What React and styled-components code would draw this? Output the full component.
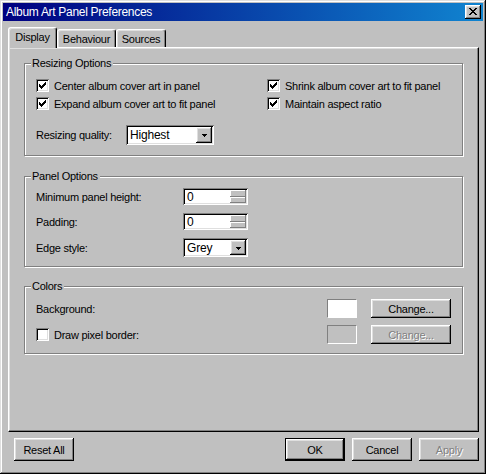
import React from 'react';
import styled, { createGlobalStyle, css } from 'styled-components';

const Global = createGlobalStyle`
  html, body { margin: 0; padding: 0; background: #c0c0c0; }
  body {
    font-family: "Liberation Sans", Arial, sans-serif;
    font-size: 11px;
    letter-spacing: -0.25px;
    color: #000;
  }
  * { box-sizing: border-box; }
`;

const raised = css`
  box-shadow: inset -1px -1px 0 #000, inset 1px 1px 0 #fff,
    inset -2px -2px 0 #808080, inset 2px 2px 0 #dfdfdf;
`;
const sunken = css`
  box-shadow: inset 1px 1px 0 #808080, inset -1px -1px 0 #fff,
    inset 2px 2px 0 #000, inset -2px -2px 0 #dfdfdf;
`;

const Window = styled.div`
  width: 486px;
  height: 474px;
  background: #c0c0c0;
  padding: 3px;
  display: flex;
  flex-direction: column;
  box-shadow: inset -1px -1px 0 #000, inset 1px 1px 0 #dfdfdf,
    inset -2px -2px 0 #808080, inset 2px 2px 0 #fff;
`;

const TitleBar = styled.div`
  height: 18px;
  flex: none;
  display: flex;
  align-items: center;
  justify-content: space-between;
  padding: 0 2px 0 3px;
  background: linear-gradient(90deg, #000080 0%, #1084d0 100%);
`;

const TitleText = styled.span`
  color: #fff;
  font-size: 12px;
  letter-spacing: -0.3px;
  line-height: 18px;
`;

const CloseButton = styled.span`
  width: 16px;
  height: 14px;
  background: #c0c0c0;
  ${raised};
  display: flex;
  align-items: center;
  justify-content: center;
  padding: 0 1px 1px 0;
`;

const Body = styled.div`
  flex: 1;
  display: flex;
  flex-direction: column;
  padding: 6px 4px 0 5px;
`;

const TabStrip = styled.div`
  height: 20px;
  display: flex;
  align-items: flex-end;
  position: relative;
  z-index: 1;
`;

const Tab = styled.div`
  width: ${(p) => p.$w}px;
  height: ${(p) => (p.$active ? 21 : 18)}px;
  margin-bottom: ${(p) => (p.$active ? -1 : 0)}px;
  background: #c0c0c0;
  border-top: 1px solid #fff;
  border-left: 1px solid #fff;
  border-right: 1px solid #000;
  border-radius: 3px 3px 0 0;
  box-shadow: inset -1px 0 0 #808080, inset 1px 1px 0 #dfdfdf;
  display: flex;
  align-items: center;
  justify-content: center;
  padding-bottom: ${(p) => (p.$active ? 2 : 0)}px;
  font-size: 11px;
  white-space: nowrap;
`;

const Panel = styled.div`
  height: 385px;
  flex: none;
  background: #c0c0c0;
  border-top: 1px solid #fff;
  border-left: 1px solid #fff;
  border-right: 1px solid #000;
  border-bottom: 1px solid #000;
  box-shadow: inset -1px -1px 0 #808080, inset 1px 1px 0 #dfdfdf;
  padding: 15px 15px 0 15px;
  display: flex;
  flex-direction: column;
`;

const Group = styled.div`
  position: relative;
  height: ${(p) => p.$h}px;
  margin-top: ${(p) => p.$mt || 0}px;
  flex: none;
  border: 1px solid #808080;
  box-shadow: inset 1px 1px 0 #fff, 1px 1px 0 #fff;
  padding: ${(p) => p.$pt}px 11px 0 11px;
`;

const Legend = styled.span`
  position: absolute;
  top: -7px;
  left: 6px;
  padding: 0 2px 0 1px;
  line-height: 13px;
  background: #c0c0c0;
  white-space: nowrap;
`;

const CheckGrid = styled.div`
  display: grid;
  grid-template-columns: 231px auto;
  row-gap: 5px;
`;

const CheckRow = styled.label`
  display: flex;
  align-items: center;
  gap: 5px;
  flex: ${(p) => (p.$grow ? 1 : 'none')};
  white-space: nowrap;
`;

const CheckBox = styled.span`
  width: 13px;
  height: 13px;
  flex: none;
  background: #fff;
  ${sunken};
  display: flex;
  align-items: center;
  justify-content: center;
`;

const FieldRow = styled.div`
  display: flex;
  align-items: center;
  margin-top: ${(p) => p.$mt || 0}px;
`;

const FieldLabel = styled.span`
  width: ${(p) => (p.$w ? `${p.$w}px` : 'auto')};
  flex: ${(p) => (p.$w ? 'none' : 1)};
  white-space: nowrap;
`;

const Combo = styled.div`
  width: ${(p) => p.$w}px;
  height: ${(p) => p.$h}px;
  background: #fff;
  ${sunken};
  padding: 2px;
  display: flex;
  align-items: stretch;
`;

const FieldText = styled.span`
  flex: 1;
  padding-left: 2px;
  display: flex;
  align-items: center;
  font-size: 12px;
  letter-spacing: -0.2px;
`;

const DropButton = styled.span`
  width: 16px;
  flex: none;
  background: #c0c0c0;
  ${raised};
  display: flex;
  align-items: center;
  justify-content: center;
  padding-top: 1px;
`;

const SpinButtons = styled.span`
  width: 16px;
  flex: none;
  display: flex;
  flex-direction: column;
`;

const SpinButton = styled.span`
  flex: 1;
  background: #c0c0c0;
  box-shadow: inset -1px -1px 0 #808080, inset 1px 1px 0 #fff;
`;

const Rows = styled.div`
  display: flex;
  flex-direction: column;
  gap: ${(p) => p.$gap}px;
`;

const Swatch = styled.span`
  width: 30px;
  height: 19px;
  flex: none;
  background: ${(p) => p.$color};
  border: 1px solid;
  border-color: #808080 #fff #fff #808080;
`;

const Button = styled.button`
  width: ${(p) => p.$w}px;
  height: ${(p) => p.$h}px;
  margin-left: ${(p) => p.$ml || 0}px;
  flex: none;
  padding: 0;
  border: ${(p) => (p.$default ? '1px solid #000' : 'none')};
  background: #c0c0c0;
  ${raised};
  font-family: inherit;
  font-size: 11px;
  letter-spacing: -0.25px;
  color: ${(p) => (p.disabled ? '#808080' : '#000')};
  text-shadow: ${(p) => (p.disabled ? '1px 1px 0 #fff' : 'none')};
  cursor: default;
`;

const ButtonBar = styled.div`
  display: flex;
  align-items: center;
  gap: 7px;
  margin-top: 6px;
  padding-left: 6px;
`;

const Spacer = styled.span`
  flex: 1;
`;

const CheckMark = () => (
  <svg width="7" height="7" viewBox="0 0 7 7" shapeRendering="crispEdges">
    <path
      d="M0 2h1v3H0z M1 3h1v3H1z M2 4h1v3H2z M3 3h1v3H3z M4 2h1v3H4z M5 1h1v3H5z M6 0h1v3H6z"
      fill="#000"
    />
  </svg>
);

const CloseGlyph = () => (
  <svg width="8" height="7" viewBox="0 0 8 7" shapeRendering="crispEdges">
    <path
      d="M0 0h2v1H0z M6 0h2v1H6z M1 1h2v1H1z M5 1h2v1H5z M2 2h4v1H2z M3 3h2v1H3z M2 4h4v1H2z M1 5h2v1H1z M5 5h2v1H5z M0 6h2v1H0z M6 6h2v1H6z"
      fill="#000"
    />
  </svg>
);

const DownArrow = () => (
  <svg width="5" height="3" viewBox="0 0 5 3" shapeRendering="crispEdges">
    <path d="M0 0h5v1H0z M1 1h3v1H1z M2 2h1v1H2z" fill="#000" />
  </svg>
);

const Check = ({ checked, children }) => (
  <CheckRow>
    <CheckBox>{checked && <CheckMark />}</CheckBox>
    <span>{children}</span>
  </CheckRow>
);

const Select = ({ w, h, value }) => (
  <Combo $w={w} $h={h}>
    <FieldText>{value}</FieldText>
    <DropButton>
      <DownArrow />
    </DropButton>
  </Combo>
);

const SpinBox = ({ value }) => (
  <Combo $w={65} $h={17}>
    <FieldText>{value}</FieldText>
    <SpinButtons>
      <SpinButton />
      <SpinButton />
    </SpinButtons>
  </Combo>
);

export default function App() {
  return (
    <>
      <Global />
      <Window>
        <TitleBar>
          <TitleText>Album Art Panel Preferences</TitleText>
          <CloseButton>
            <CloseGlyph />
          </CloseButton>
        </TitleBar>
        <Body>
          <TabStrip>
            <Tab $active $w={49}>Display</Tab>
            <Tab $w={59}>Behaviour</Tab>
            <Tab $w={50}>Sources</Tab>
          </TabStrip>
          <Panel>
            <Group $h={93} $pt={15}>
              <Legend>Resizing Options</Legend>
              <CheckGrid>
                <Check checked>Center album cover art in panel</Check>
                <Check checked>Shrink album cover art to fit panel</Check>
                <Check checked>Expand album cover art to fit panel</Check>
                <Check checked>Maintain aspect ratio</Check>
              </CheckGrid>
              <FieldRow $mt={15}>
                <FieldLabel $w={90}>Resizing quality:</FieldLabel>
                <Select w={88} h={20} value="Highest" />
              </FieldRow>
            </Group>
            <Group $h={91} $mt={20} $pt={11}>
              <Legend>Panel Options</Legend>
              <Rows $gap={8}>
                <FieldRow>
                  <FieldLabel $w={147}>Minimum panel height:</FieldLabel>
                  <SpinBox value="0" />
                </FieldRow>
                <FieldRow>
                  <FieldLabel $w={147}>Padding:</FieldLabel>
                  <SpinBox value="0" />
                </FieldRow>
                <FieldRow>
                  <FieldLabel $w={147}>Edge style:</FieldLabel>
                  <Select w={65} h={19} value="Grey" />
                </FieldRow>
              </Rows>
            </Group>
            <Group $h={68} $mt={19} $pt={12}>
              <Legend>Colors</Legend>
              <Rows $gap={7}>
                <FieldRow>
                  <FieldLabel>Background:</FieldLabel>
                  <Swatch $color="#fff" />
                  <Button $w={80} $h={19} $ml={14}>
                    Change...
                  </Button>
                </FieldRow>
                <FieldRow>
                  <CheckRow $grow>
                    <CheckBox />
                    <span>Draw pixel border:</span>
                  </CheckRow>
                  <Swatch $color="#c0c0c0" />
                  <Button $w={80} $h={19} $ml={14} disabled>
                    Change...
                  </Button>
                </FieldRow>
              </Rows>
            </Group>
          </Panel>
          <ButtonBar>
            <Button $w={60} $h={23}>Reset All</Button>
            <Spacer />
            <Button $w={60} $h={23} $default>OK</Button>
            <Button $w={60} $h={23}>Cancel</Button>
            <Button $w={60} $h={23} disabled>Apply</Button>
          </ButtonBar>
        </Body>
      </Window>
    </>
  );
}
